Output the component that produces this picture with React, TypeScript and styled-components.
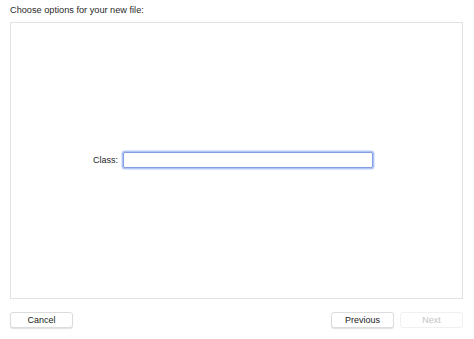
import styled, { createGlobalStyle } from "styled-components";

const Global = createGlobalStyle`
  html, body { margin: 0; padding: 0; background: #ffffff; }
  body { font-family: "Liberation Sans", Arial, sans-serif; }
`;

const Sheet = styled.div`
  width: 474px;
  height: 339px;
  box-sizing: border-box;
  padding: 0 11px 0 10px;
  display: flex;
  flex-direction: column;
  background: #ffffff;
`;

const Title = styled.div`
  height: 22px;
  line-height: 20px;
  font-size: 9.2px;
  color: #2a2a2a;
`;

const Panel = styled.div`
  flex: 1;
  border: 1px solid #e2e2e2;
  background: #ffffff;
  display: flex;
  align-items: center;
  justify-content: flex-start;
`;

const Row = styled.div`
  display: flex;
  align-items: center;
  gap: 5px;
  margin-top: -1px;
`;

const Label = styled.label`
  font-size: 9px;
  color: #262626;
  width: 107px;
  text-align: right;
`;

const Field = styled.input`
  width: 250px;
  height: 16px;
  box-sizing: border-box;
  border: 1px solid #7f9ee6;
  border-radius: 2px;
  box-shadow: 0 0 0 1.5px #b3c7f3;
  background: #ffffff;
  outline: none;
  padding: 0 4px;
  font-size: 9px;
  font-family: inherit;
`;

const Footer = styled.div`
  height: 40px;
  display: flex;
  align-items: center;
  gap: 6px;
`;

const Spacer = styled.div`
  flex: 1;
`;

const Button = styled.button<{ $disabled?: boolean }>`
  width: 63px;
  height: 16px;
  margin-top: 1px;
  box-sizing: border-box;
  border: 1px solid ${(p) => (p.$disabled ? "#f0f0f0" : "#dcdcdc")};
  border-radius: 3px;
  background: #ffffff;
  box-shadow: ${(p) => (p.$disabled ? "none" : "0 1px 1px rgba(0,0,0,0.12)")};
  font-family: inherit;
  font-size: 9px;
  color: ${(p) => (p.$disabled ? "#c4c4c4" : "#222222")};
  padding: 0;
  line-height: 14px;
`;

export default function App() {
  return (
    <>
      <Global />
      <Sheet>
        <Title>Choose options for your new file:</Title>
        <Panel>
          <Row>
            <Label htmlFor="cls">Class:</Label>
            <Field id="cls" />
          </Row>
        </Panel>
        <Footer>
          <Button>Cancel</Button>
          <Spacer />
          <Button>Previous</Button>
          <Button $disabled>Next</Button>
        </Footer>
      </Sheet>
    </>
  );
}
